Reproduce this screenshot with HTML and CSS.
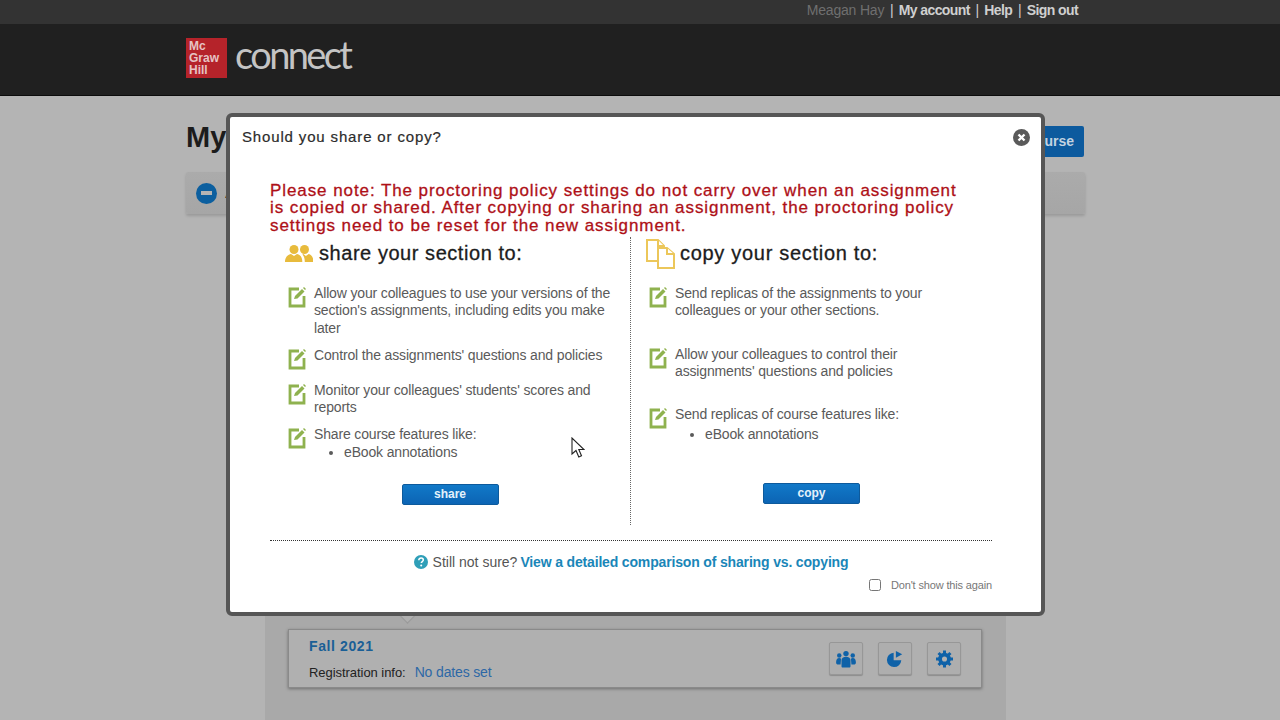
FILE: index.html
```html
<!DOCTYPE html>
<html lang="en">
<head>
  <meta charset="UTF-8">
  <title>McGraw Hill Connect</title>
  <link rel="stylesheet" href="styles.css">
</head>
<body>
  <svg class="icon-defs" width="0" height="0">
    <symbol id="edit" viewBox="0 0 18 24">
      <path d="M11 5H2v17h14v-10" fill="none" stroke="#8fb24f" stroke-width="2.8"/>
      <path d="M6 15l1-3 7-7 2.5 2.5-7 7z" fill="#8fb24f"/>
      <path d="M15 4l1-1 2 2-1 1z" fill="#8fb24f"/>
    </symbol>
  </svg>

  <div class="topbar">
    <div class="user-links">
      <span class="user-name">Meagan Hay</span><span class="sep">|</span><a>My account</a><span class="sep">|</span><a>Help</a><span class="sep">|</span><a>Sign out</a>
    </div>
  </div>
  <div class="header">
    <div class="logo-box">Mc<br>Graw<br>Hill</div>
    <div class="logo-word">connect</div>
  </div>

  <div class="page">
    <div class="title-row">
      <h1>My</h1>
      <button class="add-btn">Add course</button>
    </div>
    <div class="course-bar">
      <span class="minus"></span>
      <span class="course-name">A</span>
    </div>
    <div class="section-panel">
      <div class="section-card">
        <div class="section-info">
          <div class="section-name">Fall 2021</div>
          <div class="reg-row"><span class="reg-label">Registration info:</span><a class="reg-link">No dates set</a></div>
        </div>
        <div class="tools">
          <button class="tool-btn">
            <svg width="20" height="18" viewBox="0 0 22 20" fill="#0f62a8"><circle cx="11" cy="4" r="3"/><circle cx="3.5" cy="6" r="2.5"/><circle cx="18.5" cy="6" r="2.5"/><path d="M0 14c0-3 1-5 3.5-5 1 0 1.500.3 2 .7L5 16H1.500C.5 16 0 15 0 14zM22 14c0-3-1-5-3.500-5-1 0-1.500.3-2 .7L17 16h3.500c1 0 1.500-1 1.500-2z"/><path d="M6 11c0-2 2-3.500 5-3.500s5 1.500 5 3.500v7c0 1-.5 1.500-1.500 1.500h-7C6.500 19.500 6 19 6 18z"/></svg>
          </button>
          <button class="tool-btn">
            <svg width="18" height="18" viewBox="0 0 20 20" fill="#0f62a8"><path d="M8.500 3a8 8 0 1 0 8.500 8.500H8.500z"/><path d="M11 1v7.500l7-3.800z"/></svg>
          </button>
          <button class="tool-btn">
            <svg width="17" height="18" viewBox="0 0 20 20"><circle cx="10" cy="10" r="5.500" fill="none" stroke="#0f62a8" stroke-width="4"/><path d="M10 0v20M0 10h20M3 3l14 14M17 3L3 17" stroke="#0f62a8" stroke-width="3.500"/><circle cx="10" cy="10" r="3" fill="#b2b2b2"/></svg>
          </button>
        </div>
      </div>
    </div>
  </div>

  <div class="modal">
    <div class="modal-head">
      <span class="modal-title">Should you share or copy?</span>
      <svg class="close-icon" width="17" height="17" viewBox="0 0 17 17"><circle cx="8.500" cy="8.500" r="8.500" fill="#5a5a5a"/><path d="M5.500 5.500l6 6M11.500 5.500l-6 6" stroke="#fff" stroke-width="2.400"/></svg>
    </div>
    <p class="note">Please note: The proctoring policy settings do not carry over when an assignment is copied or shared. After copying or sharing an assignment, the proctoring policy settings need to be reset for the new assignment.</p>

    <div class="columns">
      <div class="col col-share">
        <h2 class="col-head">
          <svg width="28" height="17" viewBox="0 0 28 17" fill="#e8bb3c"><circle cx="9" cy="4.500" r="4.500"/><circle cx="19.500" cy="4.500" r="4.500"/><path d="M0 17c0-5 3-7.500 6-8l3 2 3-2c1.500.3 2.800 1 3.800 2.300 1 1.400 1.500 3.500 1.500 5.700zM19.800 17c0-3-.6-5.500-2.400-7.400l1-.6 2.500 2 2.800-2c2.600.5 4.700 3 4.700 8z"/></svg>
          share your section to:
        </h2>
        <ul class="points">
          <li><svg class="check" width="18" height="24"><use href="#edit"/></svg><div>Allow your colleagues to use your versions of the section's assignments, including edits you make later</div></li>
          <li><svg class="check" width="18" height="24"><use href="#edit"/></svg><div>Control the assignments' questions and policies</div></li>
          <li><svg class="check" width="18" height="24"><use href="#edit"/></svg><div>Monitor your colleagues' students' scores and reports</div></li>
          <li><svg class="check" width="18" height="24"><use href="#edit"/></svg><div>Share course features like:<ul class="sub"><li>eBook annotations</li></ul></div></li>
        </ul>
        <button class="action-btn">share</button>
      </div>

      <div class="col col-copy">
        <h2 class="col-head">
          <svg width="31" height="31" viewBox="0 0 31 31" fill="#fff" stroke="#ecc75a" stroke-width="2"><path d="M2 2h11l6 6v15H2z"/><path d="M13 2v6h6"/><path d="M13 10h9l7 6v14H13z"/><path d="M22 10v6h7"/></svg>
          copy your section to:
        </h2>
        <ul class="points">
          <li><svg class="check" width="18" height="24"><use href="#edit"/></svg><div>Send replicas of the assignments to your colleagues or your other sections.</div></li>
          <li><svg class="check" width="18" height="24"><use href="#edit"/></svg><div>Allow your colleagues to control their assignments' questions and policies</div></li>
          <li><svg class="check" width="18" height="24"><use href="#edit"/></svg><div>Send replicas of course features like:<ul class="sub"><li>eBook annotations</li></ul></div></li>
        </ul>
        <button class="action-btn">copy</button>
      </div>
    </div>

    <div class="modal-foot">
      <div class="not-sure">
        <svg width="14" height="14" viewBox="0 0 14 14"><circle cx="7" cy="7" r="7" fill="#2f9fb8"/><path d="M4.800 5.300c0-1.400 1-2.200 2.300-2.200s2.200.8 2.200 1.900c0 1.500-2 1.600-2 3" fill="none" stroke="#fff" stroke-width="1.500"/><circle cx="7.200" cy="10.500" r="1" fill="#fff"/></svg>
        <span class="still">Still not sure?</span>
        <a class="compare-link">View a detailed comparison of sharing vs. copying</a>
      </div>
      <label class="dont-show"><input type="checkbox"><span>Don't show this again</span></label>
    </div>
  </div>

  <svg class="cursor" width="14" height="22" viewBox="0 0 14 22"><path d="M1 1v16l4-3.500 2.800 6.500 2.700-1.200L7.800 12.500 13 12.500z" fill="#fff" stroke="#222" stroke-width="1.100"/></svg>
</body>
</html>
```

FILE: styles.css
```css
* {
  box-sizing: border-box;
}
html, body {
  height: 100%;
}
body {
  margin: 0;
  background: #b4b4b4;
  font-family: "Liberation Sans", Arial, sans-serif;
  overflow: hidden;
}
.icon-defs {
  position: absolute;
}
h1, h2, p, ul {
  margin: 0;
  padding: 0;
}
button {
  font-family: inherit;
  cursor: pointer;
}

/* top bars */
.topbar {
  height: 24px;
  background: #333;
  display: flex;
  justify-content: flex-end;
  padding: 0 202px 4px 0;
}
.user-links {
  display: flex;
  align-items: center;
  font-size: 14px;
  font-weight: bold;
  color: #cfcfcf;
  letter-spacing: -0.6px;
}
.user-name {
  color: #6f6f6f;
  font-weight: normal;
  letter-spacing: -0.2px;
}
.sep {
  margin: 0 5.750px;
  font-weight: normal;
}
.header {
  height: 72px;
  background: #202020;
  border-bottom: 1px solid #0c0c0c;
  display: flex;
  align-items: center;
  gap: 8px;
  padding: 0 0 4px 186px;
}
.logo-box {
  width: 41px;
  height: 40px;
  background: #b5232a;
  color: #e6c4c4;
  font-size: 12px;
  font-weight: bold;
  line-height: 12px;
  padding: 2px 0 0 3px;
}
.logo-word {
  font-family: "Lato", sans-serif;
  font-weight: 400;
  font-size: 38px;
  line-height: 38px;
  letter-spacing: -2.600px;
  color: #c4c4c4;
  padding-bottom: 8px;
}

/* page behind the dialog */
.page {
  margin-left: 186px;
  width: 899px;
}
.title-row {
  height: 76px;
  display: flex;
  align-items: center;
  justify-content: space-between;
  padding-top: 6px;
}
.title-row h1 {
  font-size: 29px;
  color: #1c1c1c;
}
.add-btn {
  width: 97px;
  height: 31px;
  margin: 8px 1px 0 0;
  border: none;
  border-radius: 2px;
  background: #0c5a9e;
  color: #c3d3e0;
  font-size: 14px;
  font-weight: bold;
}
.course-bar {
  height: 42px;
  background: linear-gradient(#ababab, #a6a6a6);
  border-radius: 2px;
  box-shadow: 0 2px 3px rgba(0,0,0,0.15);
  display: flex;
  align-items: center;
  gap: 8px;
  padding-left: 10px;
}
.minus {
  width: 21px;
  height: 21px;
  border-radius: 50%;
  background: #0c5f9f;
  display: flex;
  align-items: center;
  justify-content: center;
}
.minus::after {
  content: "";
  width: 11px;
  height: 4px;
  background: #b4b4b4;
}
.course-name {
  font-size: 16px;
  font-weight: bold;
}
.section-panel {
  position: relative;
  margin: 26px 0 0 79px;
  width: 741px;
  height: 480px;
  background: #a9a9a9;
  display: flex;
  flex-direction: column;
  justify-content: flex-end;
  padding: 0 24px 32px 23px;
}
.section-card {
  position: relative;
  height: 59px;
  background: #b0b0b0;
  border: 1px solid #8a8a8a;
  box-shadow: 0 1px 3px rgba(0,0,0,0.35);
  display: flex;
  align-items: center;
  justify-content: space-between;
  padding: 0 20px 0 20px;
}
.section-card::before {
  content: "";
  position: absolute;
  left: 112px;
  top: -22px;
  width: 12px;
  height: 12px;
  background: #b0b0b0;
  border-right: 1px solid #999;
  border-bottom: 1px solid #999;
  transform: rotate(45deg);
}
.section-name {
  font-size: 14px;
  font-weight: bold;
  letter-spacing: 0.6px;
  color: #1a5f96;
  margin-bottom: 10px;
}
.reg-row {
  display: flex;
  align-items: baseline;
  gap: 9px;
}
.reg-label {
  font-size: 13px;
  letter-spacing: -0.05px;
  color: #222;
}
.reg-link {
  font-size: 14px;
  letter-spacing: -0.15px;
  color: #2d68a6;
}
.tools {
  display: flex;
  gap: 15px;
}
.tool-btn {
  width: 34px;
  height: 33px;
  padding: 0;
  background: #aeaeae;
  border: 1px solid #979797;
  border-radius: 2px;
  box-shadow: 0 1px 1px rgba(0,0,0,0.2);
  display: flex;
  align-items: center;
  justify-content: center;
}

/* dialog */
.modal {
  position: absolute;
  left: 226px;
  top: 113px;
  width: 819px;
  height: 503px;
  background: #fff;
  border: 4px solid #565656;
  border-radius: 6px;
  display: flex;
  flex-direction: column;
}
.modal-head {
  height: 40px;
  display: flex;
  align-items: center;
  justify-content: space-between;
  padding: 0 11px 0 12px;
}
.modal-title {
  font-size: 15px;
  letter-spacing: 0.85px;
  -webkit-text-stroke: 0.2px #2c2c2c;
  color: #2c2c2c;
  margin-bottom: 2px;
}
.note {
  margin: 25px 0 0 40px;
  width: 700px;
  font-size: 17px;
  line-height: 17.300px;
  letter-spacing: 0.92px;
  -webkit-text-stroke: 0.3px #ae1017;
  color: #ae1017;
}
.columns {
  margin: 3px 0 0 40px;
  width: 722px;
  height: 288px;
  display: grid;
  grid-template-columns: 361px 361px;
}
.col {
  display: flex;
  flex-direction: column;
}
.col-share {
  border-right: 1px dotted #666;
  padding: 0 14px 20px 18px;
}
.col-copy {
  padding: 0 18px 21px 18px;
}
.col-head {
  height: 32px;
  display: flex;
  align-items: center;
  gap: 6px;
  margin-left: -3px;
  padding-top: 1px;
  font-size: 20px;
  font-weight: normal;
  letter-spacing: 0.55px;
  -webkit-text-stroke: 0.3px #1c1c1c;
  color: #1c1c1c;
}
.col-copy .col-head {
  gap: 4px;
  margin-left: -4px;
  letter-spacing: 0.7px;
}
.points {
  list-style: none;
  margin-top: 16px;
  display: flex;
  flex-direction: column;
  gap: 9.800px;
  font-size: 14px;
  line-height: 17.400px;
  letter-spacing: -0.15px;
  color: #5a5a5a;
}
.col-copy .points {
  gap: 25.800px;
  padding-right: 42px;
}
.points > li {
  display: flex;
  gap: 8px;
  min-height: 25px;
}
.check {
  flex: none;
  margin-top: -1px;
}
.sub {
  list-style: disc;
  padding-left: 30px;
}
.col-copy .sub {
  margin-top: 2px;
}
.action-btn {
  align-self: center;
  margin-top: auto;
  width: 97px;
  height: 21px;
  padding: 0;
  border: 1px solid #0d5a9c;
  border-radius: 2px;
  background: linear-gradient(#1179c8, #0c64b4);
  color: #e4f1fb;
  font-size: 12px;
  font-weight: bold;
}
.col-share .action-btn {
  margin-right: 4px;
}
.modal-foot {
  margin: 15px 0 0 40px;
  width: 722px;
  border-top: 1px dotted #333;
  padding-top: 13px;
}
.not-sure {
  display: flex;
  justify-content: center;
  align-items: center;
  font-size: 14px;
  color: #555;
}
.still {
  margin: 0 3px 0 5px;
}
.compare-link {
  font-weight: bold;
  letter-spacing: -0.16px;
  color: #1a86b8;
}
.dont-show {
  display: flex;
  justify-content: flex-end;
  align-items: center;
  gap: 10px;
  margin-top: 9px;
  font-size: 11px;
  letter-spacing: -0.15px;
  color: #777;
}
.dont-show input {
  margin: 0;
  width: 12px;
  height: 12px;
}

.cursor {
  position: absolute;
  left: 571px;
  top: 437px;
}
```
